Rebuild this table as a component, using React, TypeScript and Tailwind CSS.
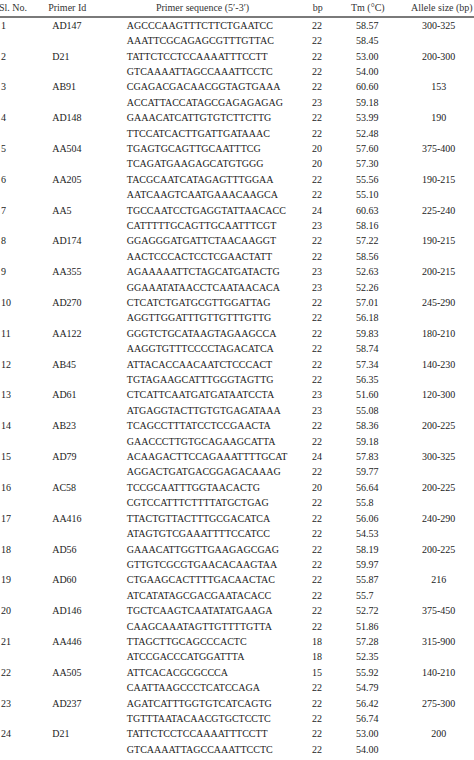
import React from "react";

type Primer = {
  id: string;
  allele: string;
  seqs: [string, string, string][];
};

const primers: Primer[] = [
  { id: "AD147", allele: "300-325", seqs: [["AGCCCAAGTTTCTTCTGAATCC", "22", "58.57"], ["AAATTCGCAGAGCGTTTGTTAC", "22", "58.45"]] },
  { id: "D21", allele: "200-300", seqs: [["TATTCTCCTCCAAAATTTCCTT", "22", "53.00"], ["GTCAAAATTAGCCAAATTCCTC", "22", "54.00"]] },
  { id: "AB91", allele: "153", seqs: [["CGAGACGACAACGGTAGTGAAA", "22", "60.60"], ["ACCATTACCATAGCGAGAGAGAG", "23", "59.18"]] },
  { id: "AD148", allele: "190", seqs: [["GAAACATCATTGTGTCTTCTTG", "22", "53.99"], ["TTCCATCACTTGATTGATAAAC", "22", "52.48"]] },
  { id: "AA504", allele: "375-400", seqs: [["TGAGTGCAGTTGCAATTTCG", "20", "57.60"], ["TCAGATGAAGAGCATGTGGG", "20", "57.30"]] },
  { id: "AA205", allele: "190-215", seqs: [["TACGCAATCATAGAGTTTGGAA", "22", "55.56"], ["AATCAAGTCAATGAAACAAGCA", "22", "55.10"]] },
  { id: "AA5", allele: "225-240", seqs: [["TGCCAATCCTGAGGTATTAACACC", "24", "60.63"], ["CATTTTTGCAGTTGCAATTTCGT", "23", "58.16"]] },
  { id: "AD174", allele: "190-215", seqs: [["GGAGGGATGATTCTAACAAGGT", "22", "57.22"], ["AACTCCCACTCCTCGAACTATT", "22", "58.56"]] },
  { id: "AA355", allele: "200-215", seqs: [["AGAAAAATTCTAGCATGATACTG", "23", "52.63"], ["GGAAATATAACCTCAATAACACA", "23", "52.26"]] },
  { id: "AD270", allele: "245-290", seqs: [["CTCATCTGATGCGTTGGATTAG", "22", "57.01"], ["AGGTTGGATTTGTTGTTTGTTG", "22", "56.18"]] },
  { id: "AA122", allele: "180-210", seqs: [["GGGTCTGCATAAGTAGAAGCCA", "22", "59.83"], ["AAGGTGTTTCCCCTAGACATCA", "22", "58.74"]] },
  { id: "AB45", allele: "140-230", seqs: [["ATTACACCAACAATCTCCCACT", "22", "57.34"], ["TGTAGAAGCATTTGGGTAGTTG", "22", "56.35"]] },
  { id: "AD61", allele: "120-300", seqs: [["CTCATTCAATGATGATAATCCTA", "23", "51.60"], ["ATGAGGTACTTGTGTGAGATAAA", "23", "55.08"]] },
  { id: "AB23", allele: "200-225", seqs: [["TCAGCCTTTATCCTCCGAACTA", "22", "58.36"], ["GAACCCTTGTGCAGAAGCATTA", "22", "59.18"]] },
  { id: "AD79", allele: "300-325", seqs: [["ACAAGACTTCCAGAAATTTTGCAT", "24", "57.83"], ["AGGACTGATGACGGAGACAAAG", "22", "59.77"]] },
  { id: "AC58", allele: "200-225", seqs: [["TCCGCAATTTGGTAACACTG", "20", "56.64"], ["CGTCCATTTCTTTTATGCTGAG", "22", "55.8"]] },
  { id: "AA416", allele: "240-290", seqs: [["TTACTGTTACTTTGCGACATCA", "22", "56.06"], ["ATAGTGTCGAAATTTTCCATCC", "22", "54.53"]] },
  { id: "AD56", allele: "200-225", seqs: [["GAAACATTGGTTGAAGAGCGAG", "22", "58.19"], ["GTTGTCGCGTGAACACAAGTAA", "22", "59.97"]] },
  { id: "AD60", allele: "216", seqs: [["CTGAAGCACTTTTGACAACTAC", "22", "55.87"], ["ATCATATAGCGACGAATACACC", "22", "55.7"]] },
  { id: "AD146", allele: "375-450", seqs: [["TGCTCAAGTCAATATATGAAGA", "22", "52.72"], ["CAAGCAAATAGTTGTTTTGTTA", "22", "51.86"]] },
  { id: "AA446", allele: "315-900", seqs: [["TTAGCTTGCAGCCCACTC", "18", "57.28"], ["ATCCGACCCATGGATTTA", "18", "52.35"]] },
  { id: "AA505", allele: "140-210", seqs: [["ATTCACACGCGCCCA", "15", "55.92"], ["CAATTAAGCCCTCATCCAGA", "22", "54.79"]] },
  { id: "AD237", allele: "275-300", seqs: [["AGATCATTTGGTGTCATCAGTG", "22", "56.42"], ["TGTTTAATACAACGTGCTCCTC", "22", "56.74"]] },
  { id: "D21", allele: "200", seqs: [["TATTCTCCTCCAAAATTTCCTT", "22", "53.00"], ["GTCAAAATTAGCCAAATTCCTC", "22", "54.00"]] },
];

const Row = ({ no, id, seq, bp, tm, allele }: { no: string; id: string; seq: string; bp: string; tm: string; allele: string }) => (
  <div className="flex h-[15.42px] items-center whitespace-nowrap">
    <div className="w-[49px] pl-[1px]">{no}</div>
    <div className="w-[80px] pl-[4px]">{id}</div>
    <div className="w-[171px]">{seq}</div>
    <div className="w-[45px] text-center">{bp}</div>
    <div className="w-[65px] pl-[17px]">{tm}</div>
    <div className="w-[72px] text-center">{allele}</div>
  </div>
);

export default function App() {
  return (
    <div className="w-[474px] h-[760px] overflow-hidden bg-white text-[#1c1c1c] text-[10px] leading-none" style={{ fontFamily: '"Liberation Serif", "Times New Roman", serif' }}>
      <div className="flex h-[18px] items-center border-b-2 border-[#7a7a7a] whitespace-nowrap text-[#333]">
        <div className="w-[49px] -ml-[1px]">Sl. No.</div>
        <div className="w-[80px] pl-[1px]">Primer Id</div>
        <div className="w-[171px] pl-[30px]">Primer sequence (5′-3′)</div>
        <div className="w-[45px] text-center pl-[2px]">bp</div>
        <div className="w-[65px] pl-[12px]">Tm (°C)</div>
        <div className="w-[72px] pl-[8px]">Allele size (bp)</div>
      </div>
      {primers.map((p, i) => (
        <React.Fragment key={i}>
          <Row no={String(i + 1)} id={p.id} seq={p.seqs[0][0]} bp={p.seqs[0][1]} tm={p.seqs[0][2]} allele={p.allele} />
          <Row no="" id="" seq={p.seqs[1][0]} bp={p.seqs[1][1]} tm={p.seqs[1][2]} allele="" />
        </React.Fragment>
      ))}
    </div>
  );
}
